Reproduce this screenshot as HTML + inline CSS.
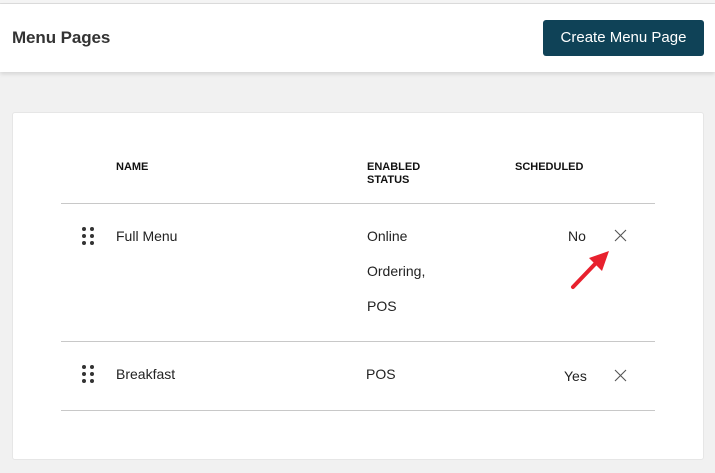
<!DOCTYPE html>
<html><head><meta charset="utf-8"><style>
*{margin:0;padding:0;box-sizing:border-box}
body{width:715px;height:473px;background:#f1f1f1;font-family:"Liberation Sans",sans-serif;position:relative;overflow:hidden;color:#222}
.top{position:absolute;left:0;top:0;width:715px;height:4px;background:#f4f4f4;border-bottom:1px solid #ddd}
.hdr{position:absolute;left:0;top:4px;width:715px;height:68px;background:#fff;box-shadow:0 2px 4px rgba(0,0,0,.12)}
.hdr h1{position:absolute;left:12px;top:24px;font-size:17px;font-weight:bold;color:#333;letter-spacing:-0.1px}
.btn{position:absolute;left:543px;top:16px;width:161px;height:36px;background:#0f4257;border-radius:3px;color:#fff;font-size:15px;text-align:center;line-height:36px}
.card{position:absolute;left:12px;top:112px;width:692px;height:348px;background:#fff;border:1px solid #e6e6e6;border-radius:3px}
.t{position:absolute;font-size:14px;color:#222}
.h{position:absolute;font-size:11px;font-weight:bold;color:#111;line-height:13px}
.line{position:absolute;left:61px;width:594px;height:1px;background:#c8c8c8}
.dots{position:absolute;width:14px;height:20px}
.dots i{position:absolute;width:4px;height:4px;border-radius:50%;background:#333}
</style></head><body>
<div class="top"></div>
<div class="hdr"><h1>Menu Pages</h1><div class="btn">Create Menu Page</div></div>
<div class="card"></div>
<div class="h" style="left:116px;top:161px">NAME</div>
<div class="h" style="left:367px;top:161px">ENABLED<br>STATUS</div>
<div class="h" style="left:515px;top:161px">SCHEDULED</div>
<div class="line" style="top:203px"></div>
<div class="line" style="top:341px"></div>
<div class="line" style="top:410px"></div>
<div class="dots" style="left:82px;top:227px"><i style="left:0;top:0"></i><i style="left:8px;top:0"></i><i style="left:0;top:7px"></i><i style="left:8px;top:7px"></i><i style="left:0;top:14px"></i><i style="left:8px;top:14px"></i></div>
<div class="dots" style="left:82px;top:365px"><i style="left:0;top:0"></i><i style="left:8px;top:0"></i><i style="left:0;top:7px"></i><i style="left:8px;top:7px"></i><i style="left:0;top:14px"></i><i style="left:8px;top:14px"></i></div>
<div class="t" style="left:116px;top:228px">Full Menu</div>
<div class="t" style="left:367px;top:228px">Online</div>
<div class="t" style="left:367px;top:263px">Ordering,</div>
<div class="t" style="left:367px;top:298px">POS</div>
<div class="t" style="left:568px;top:228px">No</div>
<div class="t" style="left:116px;top:366px">Breakfast</div>
<div class="t" style="left:366px;top:366px">POS</div>
<div class="t" style="left:564px;top:368px">Yes</div>
<svg style="position:absolute;left:0;top:0" width="715" height="473">
<g stroke="#555" stroke-width="1.1"><path d="M615 230L626 241M626 230L615 241"/><path d="M615 370L626 381M626 370L615 381"/></g>
<path d="M573 287L596 263" stroke="#e8212e" stroke-width="4" stroke-linecap="round"/>
<path d="M609 251L589 258L602 271Z" fill="#e8212e"/>
</svg>
</body></html>
